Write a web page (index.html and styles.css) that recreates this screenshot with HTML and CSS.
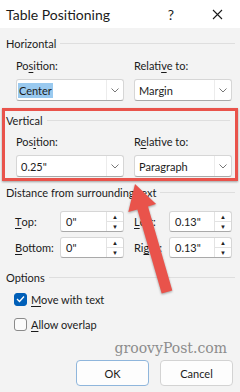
FILE: index.html
```html
<!DOCTYPE html>
<html lang="en">
<head>
    <meta charset="UTF-8" />
    <meta name="viewport" content="width=device-width, initial-scale=1" />
    <title>Table Positioning</title>
    <link rel="stylesheet" href="styles.css">
</head>
<body>
    <div class="titlebar">
        <span class="title">Table Positioning</span>
        <span class="tb_btn">?</span>
        <span class="tb_btn">
            <svg width="11" height="11" viewBox="0 0 11 11"><path d="M1 1 L10 10 M10 1 L1 10" stroke="#1b1b1b" stroke-width="1.1" fill="none"/></svg>
        </span>
    </div>

    <div class="section first">Horizontal</div>
    <div class="pair">
        <div class="field">
            <div class="label">Po<u>s</u>ition:</div>
            <div class="select">
                <span class="value"><span class="picked">Center</span></span>
                <span class="chev"><svg width="8" height="5" viewBox="0 0 8 5"><path d="M0.5 0.5 L4 4 L7.5 0.5" stroke="#777" fill="none"/></svg></span>
            </div>
        </div>
        <div class="field">
            <div class="label">Relati<u>v</u>e to:</div>
            <div class="select">
                <span class="value">Margin</span>
                <span class="chev"><svg width="8" height="5" viewBox="0 0 8 5"><path d="M0.5 0.5 L4 4 L7.5 0.5" stroke="#777" fill="none"/></svg></span>
            </div>
        </div>
    </div>

    <div class="marked">
        <div class="section inside">Vertical</div>
        <div class="pair">
            <div class="field">
                <div class="label">Pos<u>i</u>tion:</div>
                <div class="select">
                    <span class="value">0.25"</span>
                    <span class="chev"><svg width="8" height="5" viewBox="0 0 8 5"><path d="M0.5 0.5 L4 4 L7.5 0.5" stroke="#777" fill="none"/></svg></span>
                </div>
            </div>
            <div class="field">
                <div class="label">R<u>e</u>lative to:</div>
                <div class="select">
                    <span class="value">Paragraph</span>
                    <span class="chev"><svg width="8" height="5" viewBox="0 0 8 5"><path d="M0.5 0.5 L4 4 L7.5 0.5" stroke="#777" fill="none"/></svg></span>
                </div>
            </div>
        </div>
    </div>

    <div class="section distance">Distance from surrounding text</div>
    <div class="spins">
        <div class="spin_label"><u>T</u>op:</div>
        <div class="spin"><span class="value">0"</span><span class="arrows"><span>&#9650;</span><span>&#9660;</span></span></div>
        <div class="spin_label right"><u>L</u>eft:</div>
        <div class="spin"><span class="value">0.13"</span><span class="arrows"><span>&#9650;</span><span>&#9660;</span></span></div>
        <div class="spin_label"><u>B</u>ottom:</div>
        <div class="spin"><span class="value">0"</span><span class="arrows"><span>&#9650;</span><span>&#9660;</span></span></div>
        <div class="spin_label right">Ri<u>g</u>ht:</div>
        <div class="spin"><span class="value">0.13"</span><span class="arrows"><span>&#9650;</span><span>&#9660;</span></span></div>
    </div>

    <div class="section options">Options</div>
    <div class="check first_check">
        <span class="box checked"><svg width="9" height="8" viewBox="0 0 9 8"><path d="M1 4 L3.5 6.5 L8 1.5" stroke="#fff" stroke-width="1.3" fill="none"/></svg></span>
        <span><u>M</u>ove with text</span>
    </div>
    <div class="check">
        <span class="box"></span>
        <span><u>A</u>llow overlap</span>
    </div>

    <div class="watermark">groovyPost.com</div>

    <div class="buttons">
        <div class="btn default">OK</div>
        <div class="btn">Cancel</div>
    </div>

    <svg class="arrow" width="240" height="392" viewBox="0 0 240 392">
        <polygon points="135,184 156.1,204.1 148,206.5 172.3,290.5 161.7,293.5 137.4,209.5 128.3,211.9" fill="#e9534b"/>
    </svg>
</body>
</html>
```

FILE: styles.css
```css
* {
    box-sizing: border-box;
}
html, body {
    margin: 0;
    padding: 0;
}
body {
    width: 240px;
    height: 392px;
    overflow: hidden;
    position: relative;
    background-color: #f3f3f3;
    font-family: Lato, "Noto Sans", sans-serif;
    font-size: 11px;
    color: #1b1b1b;
}
u {
    text-decoration-thickness: 1px;
    text-underline-offset: 2px;
}
.titlebar {
    height: 28px;
    background-color: #fff;
    display: flex;
    align-items: center;
    padding-left: 6px;
}
.title {
    flex: 1;
    font-size: 14px;
}
.tb_btn {
    width: 46px;
    height: 28px;
    display: flex;
    align-items: center;
    justify-content: center;
    font-size: 14px;
}
.section {
    display: flex;
    align-items: center;
    gap: 4px;
    height: 14px;
    padding: 0 5px 0 6px;
}
.section::after {
    content: "";
    flex: 1;
    height: 1px;
    background-color: #dedede;
}
.section.first {
    margin-top: 8px;
}
.section.inside {
    margin-top: 2px;
    padding-left: 1px;
}
.section.distance {
    margin-top: 4px;
}
.section.options {
    margin-top: 12px;
}
.pair {
    display: grid;
    grid-template-columns: 108px 98px;
    column-gap: 10px;
    padding-left: 16px;
    margin-top: 9px;
}
.marked .pair {
    padding-left: 11px;
    margin-top: 8px;
}
.label {
    height: 14px;
    line-height: 14px;
    margin-bottom: 6px;
}
.select {
    height: 22px;
    background-color: #fff;
    border: 1px solid #d6d6d6;
    border-bottom-color: #a9a9a9;
    border-radius: 3px;
    display: flex;
    align-items: center;
}
.select .value {
    flex: 1;
    padding-left: 1px;
    white-space: nowrap;
}
.marked .select .value,
.select .value:not(:has(.picked)) {
    padding-left: 4px;
}
.picked {
    background-color: #99c9ef;
    padding: 1px 1px;
}
.chev {
    width: 17px;
    height: 100%;
    border-left: 1px solid #ececec;
    display: flex;
    align-items: center;
    justify-content: center;
}
.marked {
    margin: 7px 2px 0;
    border: 3px solid #e9534b;
    padding-bottom: 1px;
    box-shadow: 0 1px 2px rgb(0 0 0 / 0.35);
}
.spins {
    display: grid;
    grid-template-columns: 45px 64px 45px 63px;
    row-gap: 5px;
    padding-left: 15px;
    margin-top: 12px;
}
.spin_label {
    display: flex;
    align-items: center;
    height: 21px;
}
.spin_label.right {
    padding-left: 10px;
}
.spin {
    height: 21px;
    background-color: #fff;
    border: 1px solid #d6d6d6;
    border-bottom-color: #a9a9a9;
    border-radius: 3px;
    display: flex;
    align-items: center;
}
.spin .value {
    flex: 1;
    padding-left: 5px;
}
.arrows {
    width: 17px;
    height: 100%;
    border-left: 1px solid #e3e3e3;
    display: flex;
    flex-direction: column;
}
.arrows span {
    flex: 1;
    display: flex;
    align-items: center;
    justify-content: center;
    font-size: 6px;
    color: #222;
}
.arrows span:first-child {
    border-bottom: 1px solid #e3e3e3;
}
.check {
    display: flex;
    align-items: center;
    gap: 4px;
    height: 18px;
    padding-left: 14px;
    margin-top: 7px;
}
.first_check {
    margin-top: 6px;
}
.box {
    width: 13px;
    height: 13px;
    border: 1px solid #8a8a8a;
    border-radius: 3px;
    background-color: #fbfbfb;
    display: flex;
    align-items: center;
    justify-content: center;
}
.box.checked {
    background-color: #005fb8;
    border-color: #005fb8;
}
.watermark {
    margin-top: 6px;
    height: 18px;
    line-height: 18px;
    text-align: right;
    padding-right: 13px;
    font-family: "DejaVu Serif", serif;
    font-size: 14px;
    color: #8c8c8c;
}
.buttons {
    display: flex;
    justify-content: flex-end;
    gap: 11px;
    padding-right: 7px;
    margin-top: 3px;
}
.btn {
    width: 73px;
    height: 26px;
    display: flex;
    align-items: center;
    justify-content: center;
    background-color: #fdfdfd;
    border: 1px solid #d3d3d3;
    border-radius: 4px;
}
.btn.default {
    border-color: #8fb6dc;
}
.arrow {
    position: absolute;
    left: 0;
    top: 0;
    filter: drop-shadow(0 1px 1px rgb(0 0 0 / 0.35));
}
```
